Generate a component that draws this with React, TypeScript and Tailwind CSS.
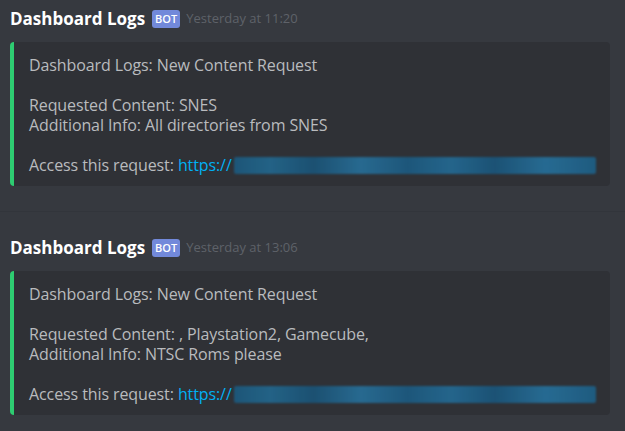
import React from 'react';

type Msg = {
  time: string;
  content: string;
  info: string;
};

const messages: Msg[] = [
  { time: 'Yesterday at 11:20', content: 'SNES', info: 'All directories from SNES' },
  { time: 'Yesterday at 13:06', content: ', Playstation2, Gamecube,', info: 'NTSC Roms please' },
];

function Blurred() {
  // redacted part of the link, drawn as a smeared blue bar
  return (
    <span className="inline-block align-middle ml-[2px] h-[17px] w-[362px] rounded-[2px] bg-[linear-gradient(90deg,#1c5a7f_0%,#22688f_10%,#1a5478_22%,#27709a_35%,#1c5b82_48%,#236b95_60%,#1a567c_72%,#26719c_86%,#1d6088_100%)] blur-[1px] opacity-90" />
  );
}

function Message({ msg }: { msg: Msg }) {
  return (
    <div className="px-[10px]">
      <div className="flex items-center h-[22px]">
        <span className="text-[17px] font-bold text-white">Dashboard Logs</span>
        <span className="ml-[7px] bg-[#7289da] text-white text-[11px] font-semibold rounded-[3px] px-[3px] h-[18px] leading-[18px]">BOT</span>
        <span className="ml-[6px] text-[13px] text-[#5e6269]">{msg.time}</span>
      </div>
      <div className="mt-[12px] w-[600px] flex rounded-[4px] overflow-hidden bg-[#2f3136]">
        <div className="w-[4px] bg-[#2ecc71] shrink-0" />
        <div className="pl-[15px] pt-[13px] pb-[11px] text-[16px] leading-[20px] tracking-[-0.1px] text-[#b9bbbe]">
          <div>Dashboard Logs: New Content Request</div>
          <div className="h-[20px]" />
          <div>Requested Content: {msg.content}</div>
          <div>Additional Info: {msg.info}</div>
          <div className="h-[20px]" />
          <div className="flex items-center">
            <span>Access this request:&nbsp;</span>
            <span className="text-[#00b0f4]">https://</span>
            <Blurred />
          </div>
        </div>
      </div>
    </div>
  );
}

export default function App() {
  return (
    <div className="w-full h-[431px] overflow-hidden bg-[#36393f] pt-[8px]" style={{ fontFamily: '"Open Sans", "Noto Sans", sans-serif' }}>
      <Message msg={messages[0]} />
      <div className="mt-[25px] h-px bg-[#32353b]" />
      <div className="mt-[25px]">
        <Message msg={messages[1]} />
      </div>
    </div>
  );
}
